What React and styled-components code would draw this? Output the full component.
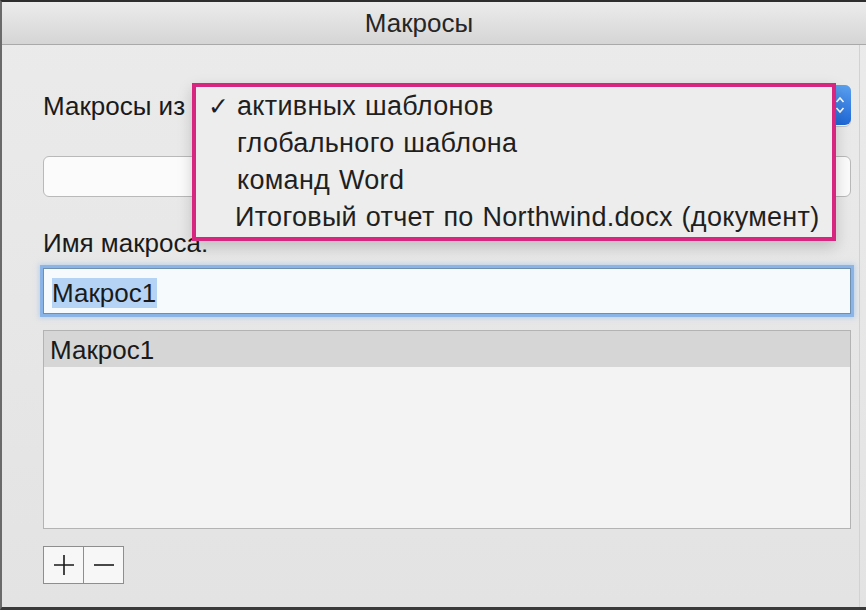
import React from 'react';
import styled, { createGlobalStyle } from 'styled-components';

const GlobalStyle = createGlobalStyle`
  html, body {
    margin: 0;
    padding: 0;
    background: #2b2b2b;
  }
  body {
    font-family: "Liberation Sans", Arial, sans-serif;
    color: #1a1a1a;
  }
`;

const Window = styled.div`
  position: relative;
  width: 866px;
  height: 610px;
  box-sizing: border-box;
  border-top: 2px solid #2e2e2e;
  border-left: 2px solid #6a6a6a;
  border-bottom: 3px solid #3a3a3a;
  background: linear-gradient(#ebebeb, #e3e3e3);
  display: flex;
  flex-direction: column;
  overflow: hidden;
`;

const TitleBar = styled.div`
  height: 42px;
  flex: none;
  display: flex;
  align-items: center;
  justify-content: center;
  background: linear-gradient(#ececec, #d5d5d5);
  border-bottom: 1px solid #a9a9a9;
  font-size: 26px;
  color: #262626;
  padding-right: 30px;
`;

const Content = styled.div`
  flex: 1;
  display: flex;
  flex-direction: column;
  padding: 41px 8px 0 41px;
  border-right: 1px solid #d2d2d2;
  margin-right: 6px;
`;

const Row = styled.div`
  display: flex;
  align-items: center;
  height: ${(p) => p.$h}px;
  margin-bottom: ${(p) => p.$mb}px;
`;

const Label = styled.div`
  font-size: 26px;
  line-height: 30px;
  white-space: nowrap;
`;

const PopupButton = styled.div`
  flex: 1;
  height: 40px;
  margin-left: 12px;
  border-radius: 6px;
  border: 1px solid #c2c2c2;
  background: #fafafa;
  display: flex;
  justify-content: flex-end;
`;

const Stepper = styled.div`
  width: 22px;
  height: 40px;
  margin: -1px -1px 0 0;
  border-radius: 0 6px 6px 0;
  background: linear-gradient(#5aa0f0, #1f68d8);
  display: flex;
  align-items: center;
  justify-content: center;
`;

const Field = styled.div`
  flex: 1;
  height: 39px;
  border: 1px solid #b9b9b9;
  border-radius: 6px;
  background: #fbfbfb;
`;

const NameInput = styled.div`
  height: 46px;
  margin: 10px 0 16px 0;
  border: 1px solid #6f8fb0;
  background: #f6fafd;
  box-shadow: 0 0 0 3px rgba(120, 170, 230, 0.75), 0 0 5px 4px rgba(140, 185, 235, 0.5);
  display: flex;
  align-items: center;
  padding: 3px 0 0 8px;
  box-sizing: border-box;
  font-size: 26px;
`;

const Selected = styled.span`
  background: #b5d3f5;
  line-height: 30px;
  padding-right: 1px;
`;

const ListBox = styled.div`
  height: 197px;
  border: 1px solid #b3b3b3;
  background: #f3f3f3;
`;

const ListRow = styled.div`
  height: 36px;
  display: flex;
  align-items: center;
  padding: 2px 0 0 6px;
  box-sizing: border-box;
  font-size: 26px;
  background: ${(p) => (p.$active ? '#d6d6d6' : 'transparent')};
`;

const ButtonGroup = styled.div`
  display: flex;
  margin-top: 17px;
`;

const SquareButton = styled.div`
  width: 39px;
  height: 36px;
  border: 1px solid #8e8e8e;
  background: #f7f7f7;
  display: flex;
  align-items: center;
  justify-content: center;
  & + & {
    border-left: none;
  }
`;

const Menu = styled.div`
  position: absolute;
  left: 190px;
  top: 81px;
  width: 636px;
  padding: 1px 0;
  border: 4px solid #d7267f;
  background: #ededed;
  box-shadow: 0 6px 14px rgba(0, 0, 0, 0.18);
`;

const MenuItem = styled.div`
  height: 37px;
  display: flex;
  align-items: center;
  font-size: 27px;
  letter-spacing: 0.3px;
  word-spacing: 1px;
  color: #1f1f1f;
  white-space: nowrap;
  padding-left: ${(p) => p.$pad}px;
`;

const Check = styled.span`
  width: 29px;
  flex: none;
  font-size: 25px;
  font-weight: bold;
  margin-left: -29px;
  font-family: "DejaVu Sans", sans-serif;
`;

const arrows = (
  <svg width="10" height="22" viewBox="0 0 10 22">
    <path d="M1.5 8 L5 4 L8.5 8 M1.5 14 L5 18 L8.5 14" fill="none" stroke="#fff" strokeWidth="1.6" />
  </svg>
);

const plus = (
  <svg width="22" height="22" viewBox="0 0 22 22">
    <path d="M11 1 V21 M1 11 H21" stroke="#1a1a1a" strokeWidth="1.6" />
  </svg>
);

const minus = (
  <svg width="22" height="22" viewBox="0 0 22 22">
    <path d="M1 11 H21" stroke="#1a1a1a" strokeWidth="1.6" />
  </svg>
);

const menuItems = [
  { text: 'активных шаблонов', checked: true, pad: 41 },
  { text: 'глобального шаблона', pad: 41 },
  { text: 'команд Word', pad: 41 },
  { text: 'Итоговый отчет по Northwind.docx (документ)', pad: 39 },
];

export default function App() {
  return (
    <>
      <GlobalStyle />
      <Window>
        <TitleBar>Макросы</TitleBar>
        <Content>
          <Row $h={40} $mb={31}>
            <Label>Макросы из</Label>
            <PopupButton>
              <Stepper>{arrows}</Stepper>
            </PopupButton>
          </Row>
          <Row $h={39} $mb={32}>
            <Field />
          </Row>
          <Row $h={30} $mb={0}>
            <Label>Имя макроса:</Label>
          </Row>
          <NameInput>
            <Selected>Макрос1</Selected>
          </NameInput>
          <ListBox>
            <ListRow $active>Макрос1</ListRow>
          </ListBox>
          <ButtonGroup>
            <SquareButton>{plus}</SquareButton>
            <SquareButton>{minus}</SquareButton>
          </ButtonGroup>
        </Content>
        <Menu>
          {menuItems.map((item) => (
            <MenuItem key={item.text} $pad={item.pad}>
              {item.checked && <Check>✓</Check>}
              {item.text}
            </MenuItem>
          ))}
        </Menu>
      </Window>
    </>
  );
}
